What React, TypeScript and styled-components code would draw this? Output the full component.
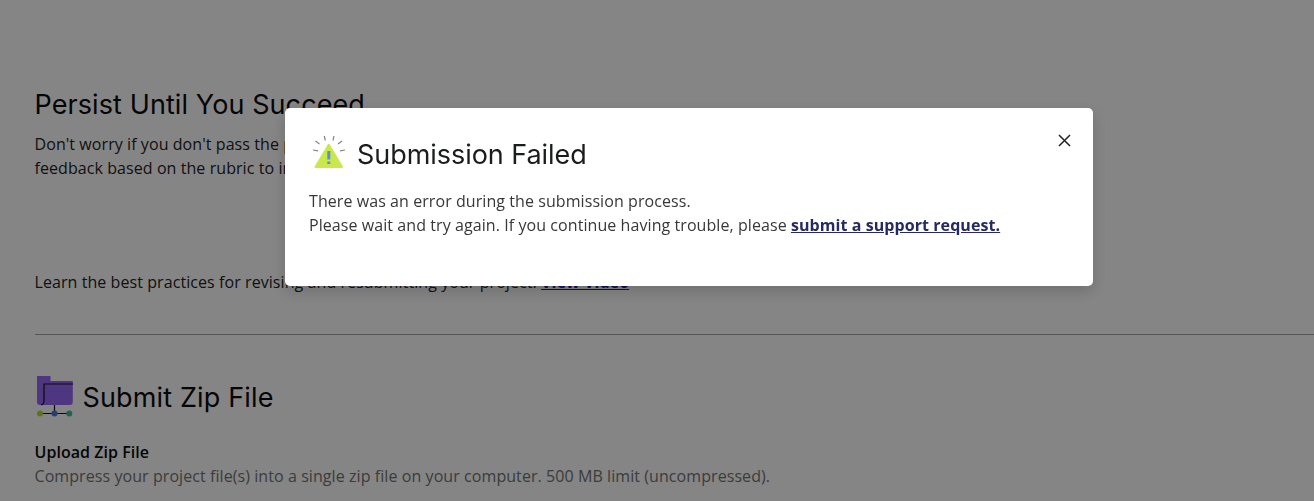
import React from 'react';
import styled, { createGlobalStyle } from 'styled-components';

const GlobalStyle = createGlobalStyle`
  * { box-sizing: border-box; }
  html, body { margin: 0; height: 100%; overflow: hidden; background: #fff; }
  body { font: 400 16px/24px "Open Sans", "Noto Sans", sans-serif; color: #242424; }
  h1, h2, p { margin: 0; }
`;

const Page = styled.main`
  height: 501px;
  padding: 88px 0 0 34.5px;
  overflow: hidden;
`;

const Heading = styled.h2<{ $spacing: number }>`
  font: 400 27px/34px Inter, "Liberation Sans", sans-serif;
  letter-spacing: ${(p) => p.$spacing}px;
  white-space: nowrap;
  color: #0b0b0b;
`;

const Copy = styled.p<{ $muted?: boolean }>`
  white-space: nowrap;
  color: ${(p) => (p.$muted ? '#747474' : 'inherit')};
  letter-spacing: 0.073px;
`;

const Intro = styled(Copy)`
  margin-top: 10px;
`;

const Learn = styled(Copy)`
  margin-top: 90px;
`;

const VideoLink = styled.a`
  font-weight: 700;
  color: #1d1dae;
  text-decoration: underline;
`;

const Divider = styled.hr`
  margin: 40px 0 0;
  border: 0;
  border-top: 1px solid #a2a2a2;
`;

const SectionTitle = styled.div`
  display: flex;
  align-items: center;
  gap: 9px;
  height: 44px;
  margin-top: 40px;
`;

const SectionHeading = styled(Heading)`
  padding-top: 2px;
`;

const Label = styled.p`
  margin-top: 21px;
  font-weight: 600;
  letter-spacing: 0.04px;
  white-space: nowrap;
  color: #0b0b0b;
`;

const Overlay = styled.div`
  position: fixed;
  inset: 0;
  padding: 108px 0 0 285px;
  background: rgba(0, 0, 0, 0.48);
`;

const Dialog = styled.section`
  width: 808px;
  height: 178px;
  padding: 24px 20px 24px 24px;
  border-radius: 5px;
  background: #fff;
  color: #383839;
  box-shadow: 0 5px 15px rgba(0, 0, 0, 0.18);
`;

const DialogHeader = styled.header`
  display: flex;
  align-items: flex-start;
  gap: 8px;
  height: 57px;
`;

const DialogHeading = styled(Heading)`
  margin-top: 6px;
  color: #1b1c1d;
`;

const CloseButton = styled.button`
  display: flex;
  margin: 0 0 0 auto;
  padding: 0;
  border: 0;
  background: none;
`;

const SupportLink = styled.a`
  font-weight: 700;
  color: #262a61;
  text-decoration: underline;
`;

const WarningIcon = () => (
  <svg width="40" height="40" viewBox="0 0 40 40" fill="none">
    <path d="M18.600 12.800q1.200-2 2.400 0L33.800 34.300q.8 1.700-1 1.700H6.800q-1.800 0-1-1.700Z" fill="#c8e84c" />
    <path d="M19.800 19v8.500M19.800 29.500v2.400" stroke="#5c8fd6" strokeWidth="3" />
    <path d="m15.300 4 1 4.500M25 4l-1 4.500M6.500 9l4 3M33 9l-4 3M4 18l5 .8M36 18l-5 .8" stroke="#858585" strokeWidth="1.200" />
  </svg>
);

const FolderIcon = () => (
  <svg width="39" height="44" viewBox="0 0 39 44" fill="none">
    <path d="M2 1h13.500v5H37.800v21q0 3-3 3H5q-3 0-3-3Z" fill="#9868f5" />
    <path d="M38 9H9v16q0 4.500-3 5" stroke="#17121f" strokeWidth="1.200" />
    <path d="M19.500 30v9M5 38.500h30" stroke="#111" strokeWidth="1.200" />
    <circle cx="5" cy="38.500" r="3" fill="#b9db35" />
    <circle cx="19.500" cy="38.500" r="3" fill="#4b78e0" />
    <circle cx="34.300" cy="38.500" r="3" fill="#42bc97" />
  </svg>
);

const CloseIcon = () => (
  <svg width="17" height="17" viewBox="0 0 17 17" fill="none">
    <path d="m3 3 11 11M14 3 3 14" stroke="#222" strokeWidth="1.500" />
  </svg>
);

export default function App() {
  return (
    <>
      <GlobalStyle />
      <Page>
        <Heading $spacing={0.09}>Persist Until You Succeed</Heading>
        <Intro>
          Don't worry if you don't pass the project<br />
          feedback based on the rubric to improve
        </Intro>
        <Learn>
          Learn the best practices for revising and resubmitting your project. <VideoLink>View Video</VideoLink>
        </Learn>
        <Divider />
        <SectionTitle>
          <FolderIcon />
          <SectionHeading $spacing={0.15}>Submit Zip File</SectionHeading>
        </SectionTitle>
        <Label>Upload Zip File</Label>
        <Copy $muted>Compress your project file(s) into a single zip file on your computer. 500 MB limit (uncompressed).</Copy>
      </Page>
      <Overlay>
        <Dialog role="dialog" aria-label="Submission Failed">
          <DialogHeader>
            <WarningIcon />
            <DialogHeading as="h1" $spacing={-0.05}>Submission Failed</DialogHeading>
            <CloseButton aria-label="Close"><CloseIcon /></CloseButton>
          </DialogHeader>
          <Copy>There was an error during the submission process.</Copy>
          <Copy>
            Please wait and try again. If you continue having trouble, please <SupportLink>submit a support request.</SupportLink>
          </Copy>
        </Dialog>
      </Overlay>
    </>
  );
}
